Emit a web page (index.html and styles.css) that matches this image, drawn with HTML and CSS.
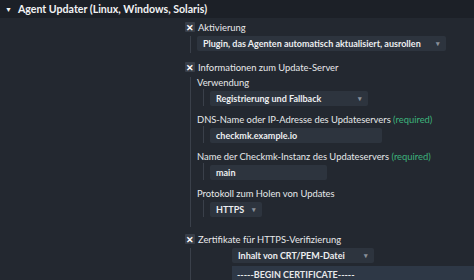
FILE: index.html
```html
<!DOCTYPE html>
<html lang="de">
<head>
    <meta charset="UTF-8">
    <title>Agent Updater</title>
    <link rel="stylesheet" href="styles.css">
</head>
<body>
    <div class="section-head">
        <span class="caret">&#9660;</span>
        <span class="section-title">Agent Updater (Linux, Windows, Solaris)</span>
    </div>
    <div class="form">
        <div class="entry">
            <span class="check">&#10005;</span>
            <span class="entry-label">Aktivierung</span>
        </div>
        <div class="group group-short">
            <div class="select select-wide">
                <span>Plugin, das Agenten automatisch aktualisiert, ausrollen</span>
                <span class="arrow">&#9662;</span>
            </div>
        </div>

        <div class="entry">
            <span class="check">&#10005;</span>
            <span class="entry-label">Informationen zum Update-Server</span>
        </div>
        <div class="group">
            <div class="field-label">Verwendung</div>
            <div class="sub">
                <div class="select select-usage">
                    <span>Registrierung und Fallback</span>
                    <span class="arrow">&#9662;</span>
                </div>
            </div>
            <div class="field-label">DNS-Name oder IP-Adresse des Updateservers <span class="req">(required)</span></div>
            <div class="sub">
                <div class="input input-host">checkmk.example.io</div>
            </div>
            <div class="field-label">Name der Checkmk-Instanz des Updateservers <span class="req">(required)</span></div>
            <div class="sub">
                <div class="input input-site">main</div>
            </div>
            <div class="field-label">Protokoll zum Holen von Updates</div>
            <div class="sub sub-last">
                <div class="select select-proto">
                    <span>HTTPS</span>
                    <span class="arrow">&#9662;</span>
                </div>
            </div>
        </div>

        <div class="entry">
            <span class="check">&#10005;</span>
            <span class="entry-label">Zertifikate für HTTPS-Verifizierung</span>
        </div>
        <div class="group group-cert">
            <div class="select select-cert">
                <span>Inhalt von CRT/PEM-Datei</span>
                <span class="arrow">&#9662;</span>
            </div>
            <div class="textarea">-----BEGIN CERTIFICATE-----</div>
        </div>
    </div>
</body>
</html>
```

FILE: styles.css
```css
body {
    margin: 0;
    background-color: #232830;
    color: #e6e8ea;
    font-family: Lato, "Open Sans", sans-serif;
    font-size: 9.4px;
    overflow: hidden;
}
.section-head {
    display: flex;
    align-items: center;
    height: 18px;
    padding-left: 5px;
    background-color: #1c2027;
    font-weight: bold;
    font-size: 10.6px;
    color: #f2f3f4;
}
.caret {
    font-size: 7px;
    margin-right: 6px;
}
.form {
    padding-left: 185px;
    padding-top: 4px;
}
.entry {
    display: flex;
    align-items: center;
    height: 10px;
}
.check {
    display: flex;
    align-items: center;
    justify-content: center;
    width: 10px;
    height: 10px;
    background-color: #383e48;
    border-radius: 1px;
    color: #ffffff;
    font-size: 9px;
    font-weight: bold;
    margin-right: 3px;
}
.entry-label {
    color: #e8e9eb;
}
.group {
    margin-left: 5px;
    border-left: 1px solid #3a404a;
    padding-left: 6px;
    margin-top: 5px;
    padding-bottom: 10px;
    margin-bottom: 7px;
}
.group-short {
    margin-top: 4px;
    padding-bottom: 2px;
    margin-bottom: 9px;
}
.group-cert {
    margin-top: 4px;
    padding-left: 41px;
    padding-bottom: 0;
}
.field-label {
    height: 12px;
    line-height: 12px;
    margin-top: 3px;
}
.field-label:first-child {
    margin-top: 0;
}
.req {
    color: #3db37c;
}
.sub {
    margin-left: 6px;
    border-left: 1px solid #3a404a;
    padding-left: 6px;
    padding-top: 2px;
    margin-bottom: 8px;
}
.sub-last {
    margin-bottom: 0;
}
.select, .input {
    display: flex;
    align-items: center;
    height: 15px;
    padding: 0 6px;
    background-color: #2d343e;
    border-radius: 2px;
    box-sizing: border-box;
    font-size: 9px;
    font-weight: bold;
    color: #eceef0;
}
.select {
    justify-content: space-between;
}
.arrow {
    font-size: 7px;
    color: #8a909a;
}
.select-wide {
    width: 249px;
}
.select-usage {
    width: 158px;
}
.input-host {
    width: 172px;
}
.input-site {
    width: 117px;
}
.select-proto {
    width: 52px;
}
.select-cert {
    width: 142px;
}
.textarea {
    margin-top: 3px;
    height: 20px;
    padding: 3px 5px;
    background-color: #2e3846;
    font-size: 9px;
    font-weight: bold;
    box-sizing: border-box;
}
```
